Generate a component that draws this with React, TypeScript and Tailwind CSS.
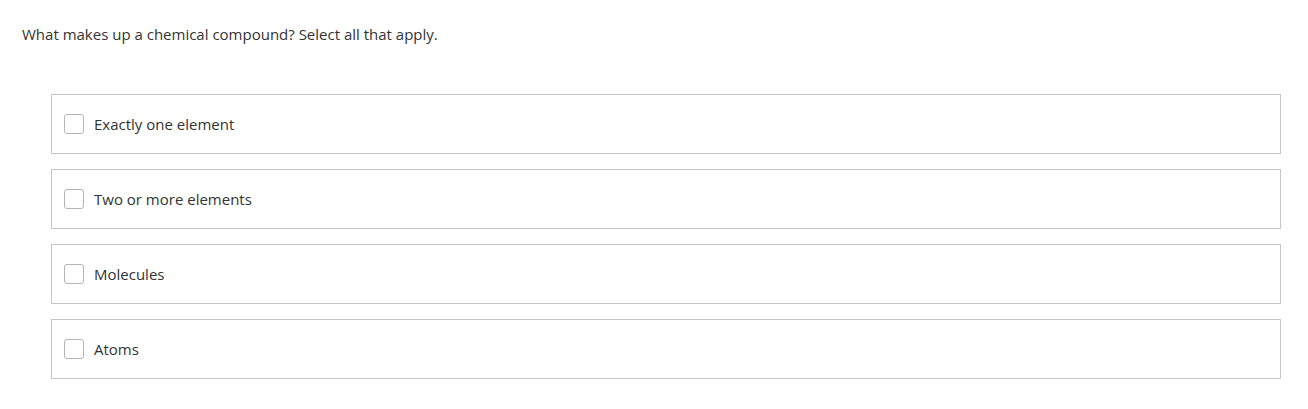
import React from "react";

const OPTIONS = ["Exactly one element", "Two or more elements", "Molecules", "Atoms"];

export default function App() {
  return (
    <div className="min-h-screen bg-white font-['Open_Sans',sans-serif] text-[#333333]">
      <div className="pl-[22px] pr-[27px] pt-[24px]">
        <p className="text-[15px] leading-[21px]">What makes up a chemical compound? Select all that apply.</p>

        {/* Answer options */}
        <div className="mt-[49px] ml-[29px] flex flex-col gap-[15px]">
          {OPTIONS.map((label) => (
            <label
              key={label}
              className="flex h-[60px] items-center gap-[10px] border border-[#c6c6c6] pl-[12px] cursor-pointer"
            >
              <span className="h-[20px] w-[20px] rounded-[3px] border border-[#b5b5b5] bg-white" />
              <span className="pt-[1px] text-[15px] leading-[21px]">{label}</span>
            </label>
          ))}
        </div>
      </div>
    </div>
  );
}
